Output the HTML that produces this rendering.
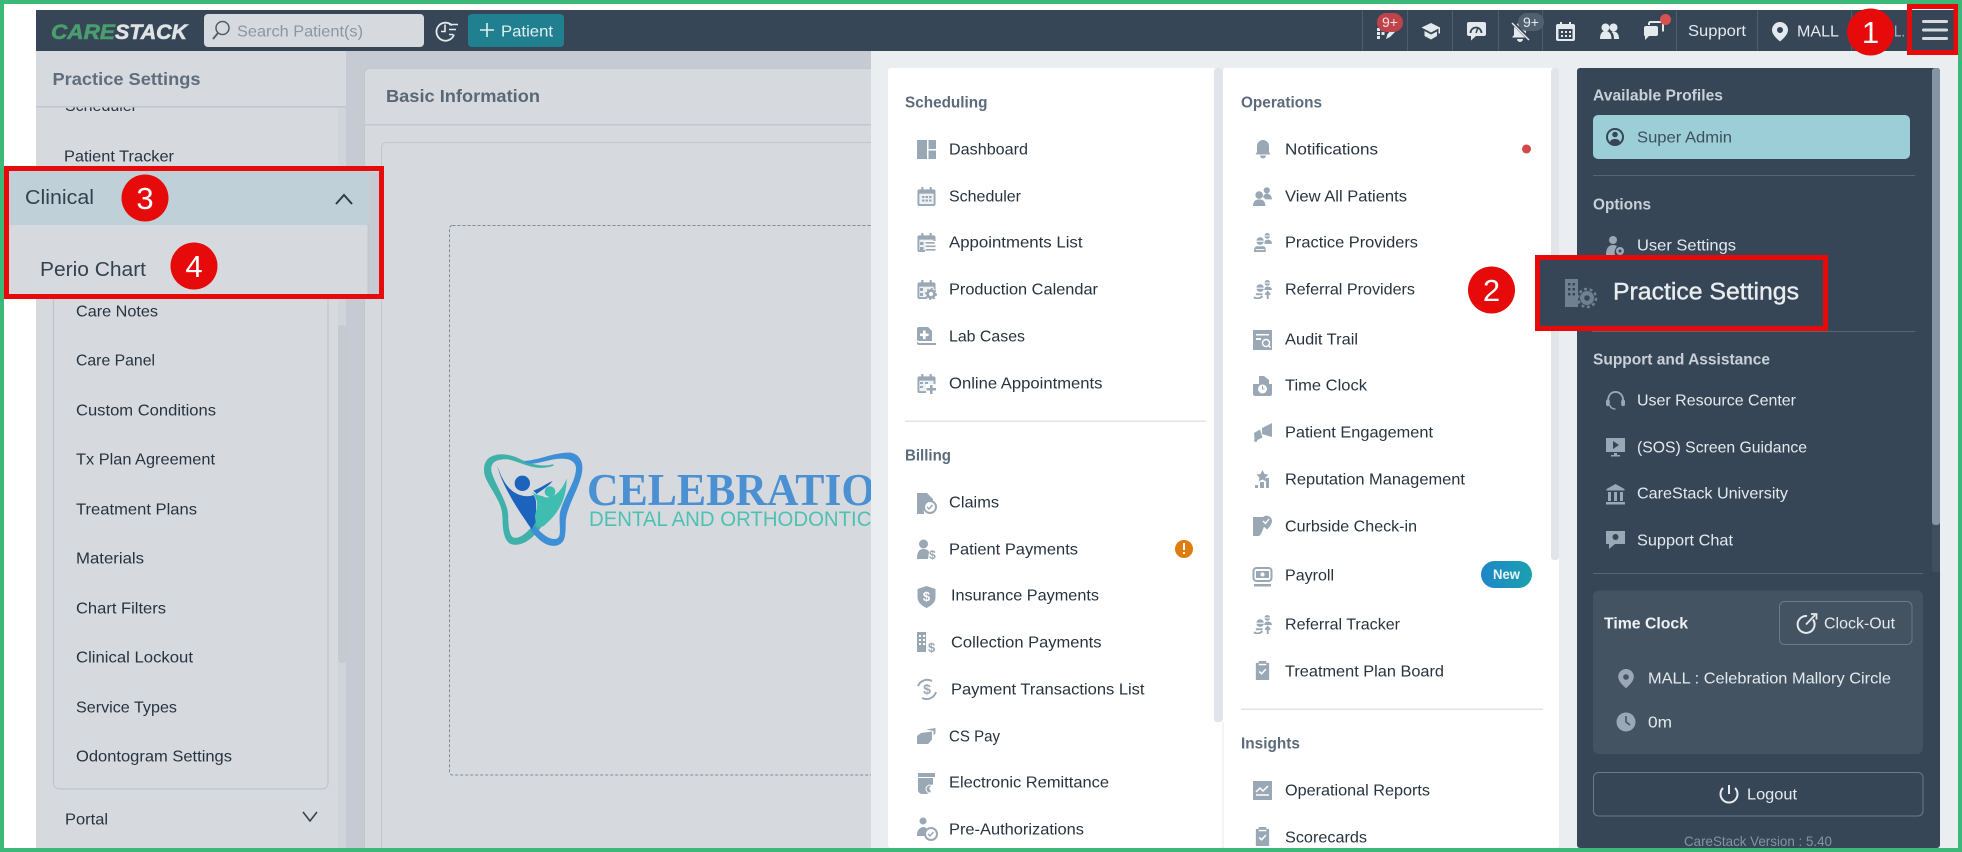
<!DOCTYPE html>
<html><head><meta charset="utf-8"><title>Practice Settings</title>
<style>
html,body{margin:0;padding:0;background:#fff}
svg{display:block;font-family:"Liberation Sans",sans-serif}
.i{font-size:16px;fill:#27333f}
.s{font-size:16px;fill:#27333f}
.h{font-size:16px;font-weight:bold;fill:#5c6b7b}
.d{font-size:16px;fill:#e4e9ed}
.dh{font-size:16px;font-weight:bold;fill:#c8d0d8}
.ic{fill:#9aa8b5}
.wh{fill:#e4e9ed}
.di{fill:#9aa8b5}
.n{font-size:31px;fill:#fff;text-anchor:middle}
</style></head><body>
<svg xmlns="http://www.w3.org/2000/svg" width="1962" height="852" viewBox="0 0 1962 852">
<defs>
<clipPath id="cSide"><rect x="36" y="107" width="310" height="60"/></clipPath>
<clipPath id="cVer"><rect x="1577" y="800" width="363" height="48"/></clipPath>
<symbol id="cal" viewBox="0 0 20 20"><path d="M2.500 2.500h15a2 2 0 0 1 2 2V18a2 2 0 0 1-2 2h-15a2 2 0 0 1-2-2V4.500a2 2 0 0 1 2-2z"/><rect x="4.500" y="0" width="2.200" height="4"/><rect x="13.300" y="0" width="2.200" height="4"/><rect x="2.500" y="7" width="15" height="11" fill="#eef1f3"/></symbol>
<symbol id="ppl" viewBox="0 0 20 20"><circle cx="6.500" cy="8.500" r="4"/><path d="M0 20c0-5 2.500-7 6.500-7S13 15 13 20z"/><circle cx="14.500" cy="3.500" r="3.300"/><path d="M10.500 10.500c1-2.500 2.500-3.500 4-3.500 3 0 5 2 5.500 6h-7c-.7-1-1.500-2-2.500-2.500z"/></symbol>
<symbol id="prov" viewBox="0 0 20 20"><circle cx="7.500" cy="8.500" r="4"/><rect x="2" y="8" width="11" height="1.200" fill="#fff"/><path d="M1 20c0-3.500 1-6 3-6h7c2 0 2.500 2.500 2.500 6z"/><path d="M3 17h9v1H3z" fill="#fff"/><circle cx="15" cy="3" r="3"/><rect x="11" y="2.600" width="8" height="1" fill="#fff"/><path d="M12 11.500c0-3 1-4.500 3.500-4.500s4.500 1.500 4.500 4.500z"/></symbol>
<symbol id="ref" viewBox="0 0 20 20"><circle cx="7.500" cy="8.500" r="4"/><rect x="2" y="8" width="11" height="1.200" fill="#fff"/><path d="M1 18c2 2 6 2 9-1" fill="none" stroke="currentColor" stroke-width="2"/><path d="M3 14h7v2H3z"/><circle cx="15" cy="3" r="3"/><rect x="11" y="2.600" width="8" height="1" fill="#fff"/><path d="M12 10.500c0-2.500 1-3.500 3.500-3.500s4.500 1 4.500 3.500z"/><path d="M15.500 20v-7M13 15.500l2.500-3 2.500 3" fill="none" stroke="currentColor" stroke-width="2"/></symbol>
<symbol id="clip" viewBox="0 0 20 20"><path d="M3 2h3V0h8v2h3v18H3z"/><path d="M6.500 11l2.500 2.500 4.500-5" fill="none" stroke="#fff" stroke-width="1.600"/><rect x="6" y="3" width="8" height="1.500" fill="#fff"/></symbol>
<symbol id="head" viewBox="0 0 20 20"><path d="M2 12C2 5 5 1 10 1s8 4 8 9" fill="none" stroke="currentColor" stroke-width="2"/><rect x="0" y="9" width="4" height="7" rx="2"/><rect x="16" y="9" width="4" height="7" rx="2"/><path d="M4 15c1 3 3 4 6 4" fill="none" stroke="currentColor" stroke-width="1.500"/></symbol>
<linearGradient id="nw" x1="0" x2="1"><stop offset="0" stop-color="#1f86c9"/><stop offset="1" stop-color="#1aa1ae"/></linearGradient>
</defs>

<rect width="1962" height="852" fill="#fff"/>

<!-- sidebar -->
<rect x="36" y="51" width="310" height="797" fill="#d6dade"/>
<rect x="338" y="107" width="8" height="741" fill="#d1d5da"/>
<rect x="338" y="325" width="8" height="338" rx="3" fill="#c5cad0"/>
<g clip-path="url(#cSide)"><text x="65" y="111" class="s" textLength="72" lengthAdjust="spacingAndGlyphs">Scheduler</text></g>
<rect x="36" y="106" width="310" height="1.500" fill="#bfc5cf"/>
<text x="52.500" y="85" font-size="17.500" font-weight="bold" fill="#5f6d7c" textLength="148" lengthAdjust="spacingAndGlyphs">Practice Settings</text>
<text x="64" y="161.500" class="s" textLength="110" lengthAdjust="spacingAndGlyphs">Patient Tracker</text>
<rect x="53.500" y="280" width="274.500" height="509" rx="6" fill="none" stroke="#bdc4cf" stroke-width="1.200"/>
<g class="s">
<text x="76" y="316.500" class="s" textLength="82" lengthAdjust="spacingAndGlyphs">Care Notes</text>
<text x="76" y="365.500" class="s" textLength="79" lengthAdjust="spacingAndGlyphs">Care Panel</text>
<text x="76" y="415.500" class="s" textLength="140" lengthAdjust="spacingAndGlyphs">Custom Conditions</text>
<text x="76" y="464.500" class="s" textLength="139" lengthAdjust="spacingAndGlyphs">Tx Plan Agreement</text>
<text x="76" y="514.500" class="s" textLength="121" lengthAdjust="spacingAndGlyphs">Treatment Plans</text>
<text x="76" y="563.500" class="s" textLength="68" lengthAdjust="spacingAndGlyphs">Materials</text>
<text x="76" y="613.500" class="s" textLength="90" lengthAdjust="spacingAndGlyphs">Chart Filters</text>
<text x="76" y="662.500" class="s" textLength="117" lengthAdjust="spacingAndGlyphs">Clinical Lockout</text>
<text x="76" y="712.500" class="s" textLength="101" lengthAdjust="spacingAndGlyphs">Service Types</text>
<text x="76" y="761.500" class="s" textLength="156" lengthAdjust="spacingAndGlyphs">Odontogram Settings</text>
</g>
<text x="65" y="824.500" class="s" textLength="43" lengthAdjust="spacingAndGlyphs">Portal</text>
<path d="M303 812l7 9 7-9" fill="none" stroke="#36434f" stroke-width="1.600"/>

<!-- content -->
<rect x="346" y="51" width="525" height="797" fill="#c6cbd3"/>
<rect x="364.500" y="68.500" width="520" height="790" rx="5" fill="#d6dade" stroke="#c1c7d0"/>
<rect x="365" y="124" width="510" height="1.500" fill="#c1c7d0"/>
<text x="386" y="102" font-size="17.500" font-weight="bold" fill="#5a6876" textLength="154" lengthAdjust="spacingAndGlyphs">Basic Information</text>
<rect x="381.500" y="142.500" width="520" height="720" rx="5" fill="#d6dade" stroke="#c1c7d0"/>
<rect x="449.500" y="225.500" width="460" height="549.500" rx="3" fill="none" stroke="#818c99" stroke-dasharray="3 2"/>
<!-- logo -->
<g transform="translate(470 440) scale(.33333)">
<path fill="#3fb1a8" stroke="#3fb1a8" stroke-width="5" d="M75 48C45 55 38 85 50 115C75 165 100 190 100 235C100 280 108 312 135 312C165 312 190 290 215 255L200 245C175 280 150 300 130 295C115 290 112 260 112 225C110 185 70 130 62 95C58 70 70 55 110 55C150 60 190 95 250 75C215 85 180 75 140 55C115 45 95 42 75 48Z"/>
<path fill="#3f8fd6" stroke="#3f8fd6" stroke-width="5" d="M165 65C200 65 250 40 300 40C330 45 340 70 332 105C322 150 290 195 285 240C283 275 290 310 255 315C225 318 200 290 185 270L195 262C215 285 240 305 262 298C280 290 268 250 272 220C280 175 325 120 320 80C315 55 285 50 255 55C220 60 190 75 165 65Z"/>
<path fill="#1c63bd" d="M82 78C95 130 130 190 185 268L198 245C195 215 205 180 190 165C180 170 165 170 150 165C120 155 100 130 82 78Z"/>
<circle cx="157" cy="130" r="23" fill="#1c63bd"/>
<path fill="#1c63bd" d="M190 152C210 145 230 130 248 123C235 140 215 150 200 162Z"/>
<path fill="#3fbdb0" d="M185 155C205 170 215 165 225 172C250 175 275 155 290 115C290 170 270 215 230 250C205 275 195 255 195 225C205 195 205 180 185 155Z"/>
<circle cx="240" cy="155" r="16" fill="#3fbdb0"/>
</g>
<text x="587" y="505" font-family="Liberation Serif,serif" font-weight="bold" font-size="46" fill="#4a90d2" textLength="320" lengthAdjust="spacingAndGlyphs">CELEBRATION</text>
<text x="589" y="526" font-size="21" fill="#4fc1b3" textLength="296" lengthAdjust="spacingAndGlyphs">DENTAL AND ORTHODONTICS</text>

<!-- menu panel -->
<rect x="871" y="51" width="1087" height="797" fill="#eaeef1"/>
<rect x="888" y="68" width="335" height="780" rx="3" fill="#fff"/>
<rect x="1223" y="68" width="336" height="780" rx="3" fill="#fff"/>
<rect x="1214" y="68" width="9" height="654" rx="3" fill="#e1e5e9"/>
<rect x="1222.500" y="722" width="1" height="126" fill="#e4e8ee"/>
<rect x="1551" y="68" width="8" height="492" rx="3" fill="#e1e5e9"/>
<rect x="1559" y="68" width="18" height="780" fill="#eaeef1"/>

<!-- Col 1 -->
<text x="905" y="107.500" class="h" textLength="82.500" lengthAdjust="spacingAndGlyphs">Scheduling</text>
<rect x="905" y="420.500" width="301" height="1.500" fill="#e1e4ea"/>
<text x="905" y="460.500" class="h" textLength="46" lengthAdjust="spacingAndGlyphs">Billing</text>
<text x="949" y="154.500" class="i" textLength="79" lengthAdjust="spacingAndGlyphs">Dashboard</text>
<text x="949" y="201.500" class="i" textLength="72" lengthAdjust="spacingAndGlyphs">Scheduler</text>
<text x="949" y="247.500" class="i" textLength="133.500" lengthAdjust="spacingAndGlyphs">Appointments List</text>
<text x="949" y="294.500" class="i" textLength="149" lengthAdjust="spacingAndGlyphs">Production Calendar</text>
<text x="949" y="341.500" class="i" textLength="76" lengthAdjust="spacingAndGlyphs">Lab Cases</text>
<text x="949" y="388.500" class="i" textLength="153.500" lengthAdjust="spacingAndGlyphs">Online Appointments</text>
<text x="949" y="507.500" class="i" textLength="50" lengthAdjust="spacingAndGlyphs">Claims</text>
<text x="949" y="554.500" class="i" textLength="129" lengthAdjust="spacingAndGlyphs">Patient Payments</text>
<text x="951" y="600.500" class="i" textLength="148" lengthAdjust="spacingAndGlyphs">Insurance Payments</text>
<text x="951" y="647.500" class="i" textLength="150.500" lengthAdjust="spacingAndGlyphs">Collection Payments</text>
<text x="951" y="694.500" class="i" textLength="193.500" lengthAdjust="spacingAndGlyphs">Payment Transactions List</text>
<text x="949" y="741.500" class="i" textLength="51" lengthAdjust="spacingAndGlyphs">CS Pay</text>
<text x="949" y="787.500" class="i" textLength="160" lengthAdjust="spacingAndGlyphs">Electronic Remittance</text>
<text x="949" y="834.500" class="i" textLength="135" lengthAdjust="spacingAndGlyphs">Pre-Authorizations</text>

<!-- Col 1 icons -->
<g class="ic" color="#9aa8b5">
<path d="M917 140h10v19h-10zM928.500 140h7.500v9h-7.500zM928.500 150.500h7.500v8.500h-7.500z"/>
<use href="#cal" x="917" y="187" width="19" height="19"/><path d="M922 196h2.500v2H922zM925.500 196h2.500v2h-2.500zM929 196h2.500v2H929zM922 199.500h2.500v2H922zM925.500 199.500h2.500v2h-2.500zM929 199.500h2.500v2H929z"/>
<use href="#cal" x="917" y="233" width="19" height="19"/><rect x="925" y="241" width="11" height="12" fill="#fff"/><path d="M920 242h3.500v3H920zM920 247h3.500v3H920zM925.500 242h9v1.600h-9zM925.500 245.500h10v1.600h-10zM925.500 249h10v1.600h-10z"/>
<use href="#cal" x="917" y="280" width="19" height="19"/><circle cx="931" cy="294" r="6" fill="#fff"/><circle cx="931" cy="294" r="3.500" fill="none" stroke="#9aa8b5" stroke-width="2.800"/><circle cx="931" cy="294" r="5.200" fill="none" stroke="#9aa8b5" stroke-width="1.600" stroke-dasharray="2 2"/><path d="M920 288h3v3h-3zM920 293h3v3h-3z"/>
<path d="M919 327h9l4 4v10h-13a3 3 0 0 1-2-1V329a2 2 0 0 1 2-2z"/><path d="M922.500 343h13.500v2h-17a2 2 0 0 1-2-2v-1.500c.5 1 1.500 1.500 3 1.500z"/><path d="M923 330.500h2.600v3h3v2.600h-3v3H923v-3h-3v-2.600h3z" fill="#fff"/>
<use href="#cal" x="917" y="374" width="19" height="19"/><rect x="926" y="384" width="11" height="10" fill="#fff"/><path d="M930 385h2.500v3H936v2.500h-3.500V394H930v-3.500h-3.500V388H930z"/><path d="M920 382h3v2h-3zM920 386h3v2h-3zM925 382h3v2h-3z"/>
<path d="M917 493h10l6 6v3a8 8 0 0 0-9 10v2h-7z"/><circle cx="930" cy="507" r="6" fill="#fff" stroke="#9aa8b5" stroke-width="2"/><path d="M927 507l2 2 3.500-4" fill="none" stroke="#9aa8b5" stroke-width="1.400"/>
<circle cx="923.500" cy="544" r="4.500"/><path d="M917 559c0-7 2-10 6.500-10s5 2 5.500 3l-1 7z"/><text x="929" y="559" font-size="12" font-weight="bold" fill="#9aa8b5">$</text>
<path d="M926.500 586l9 3v8c0 6-5 9-9 11-4-2-9-5-9-11v-8z"/><text x="926.500" y="601" font-size="13" font-weight="bold" text-anchor="middle" fill="#fff">$</text>
<path d="M917 632h9v20h-9z"/><path d="M919 635h2v2h-2zM923 635h2v2h-2zM919 639h2v2h-2zM923 639h2v2h-2zM919 643h2v2h-2zM923 643h2v2h-2z" fill="#fff"/><text x="928" y="652" font-size="13" font-weight="bold" fill="#9aa8b5">$</text>
<text x="927" y="694" font-size="14" font-weight="bold" text-anchor="middle" fill="#9aa8b5">$</text><path d="M918 686a10 10 0 0 1 14-5M936 692a10 10 0 0 1-14 6" fill="none" stroke="#9aa8b5" stroke-width="2"/>
<path d="M921 733l11-1.500v8l-4 4.500h-11v-8z"/><path d="M926 729.500l9.500-1.500v5.500l-2 2v-4.500z"/>
<path d="M918 773h17v4h-17zM918 778h15v6l-4 4 2 4-4 2h-5c-2 0-4-2-4-4z"/><circle cx="930" cy="789" r="4" fill="none" stroke="#fff" stroke-width="1"/>
<circle cx="923" cy="821" r="3.500"/><path d="M917 835c0-5 3-8 7-8 1 0 2 1 3 2-2 2-2 5-1 7h-9z"/><circle cx="931" cy="834" r="6" fill="#fff" stroke="#9aa8b5" stroke-width="2"/><path d="M928 834l2 2 3.500-4" fill="none" stroke="#9aa8b5" stroke-width="1.400"/>
</g>
<ellipse cx="1184" cy="549" rx="9" ry="9" fill="#e07c0c"/><rect x="1183" y="543" width="2" height="7" fill="#fff"/><rect x="1183" y="552" width="2" height="2" fill="#fff"/>

<!-- Col 2 -->
<text x="1241" y="107.500" class="h" textLength="81" lengthAdjust="spacingAndGlyphs">Operations</text>
<text x="1285" y="154.500" class="i" textLength="93" lengthAdjust="spacingAndGlyphs">Notifications</text>
<text x="1285" y="201.500" class="i" textLength="122" lengthAdjust="spacingAndGlyphs">View All Patients</text>
<text x="1285" y="247.500" class="i" textLength="133" lengthAdjust="spacingAndGlyphs">Practice Providers</text>
<text x="1285" y="294.500" class="i" textLength="130" lengthAdjust="spacingAndGlyphs">Referral Providers</text>
<text x="1285" y="344.500" class="i" textLength="73" lengthAdjust="spacingAndGlyphs">Audit Trail</text>
<text x="1285" y="390.500" class="i" textLength="82" lengthAdjust="spacingAndGlyphs">Time Clock</text>
<text x="1285" y="437.500" class="i" textLength="148" lengthAdjust="spacingAndGlyphs">Patient Engagement</text>
<text x="1285" y="484.500" class="i" textLength="180" lengthAdjust="spacingAndGlyphs">Reputation Management</text>
<text x="1285" y="531.500" class="i" textLength="132" lengthAdjust="spacingAndGlyphs">Curbside Check-in</text>
<text x="1285" y="580.500" class="i" textLength="49" lengthAdjust="spacingAndGlyphs">Payroll</text>
<text x="1285" y="629.500" class="i" textLength="115" lengthAdjust="spacingAndGlyphs">Referral Tracker</text>
<text x="1285" y="676.500" class="i" textLength="159" lengthAdjust="spacingAndGlyphs">Treatment Plan Board</text>
<rect x="1241" y="708.500" width="302" height="1.500" fill="#e1e4ea"/>
<text x="1241" y="748.500" class="h" textLength="59" lengthAdjust="spacingAndGlyphs">Insights</text>
<text x="1285" y="795.500" class="i" textLength="145" lengthAdjust="spacingAndGlyphs">Operational Reports</text>
<text x="1285" y="842.500" class="i" textLength="82" lengthAdjust="spacingAndGlyphs">Scorecards</text>
<circle cx="1526.500" cy="149" r="4.500" fill="#d3484b"/>
<rect x="1481" y="561" width="51" height="27" rx="13.500" fill="url(#nw)"/>
<text x="1493" y="579" font-size="14" font-weight="bold" fill="#eaf4f7" textLength="27" lengthAdjust="spacingAndGlyphs">New</text>

<!-- Col 2 icons -->
<g class="ic" color="#9aa8b5">
<path d="M1263 140a6 6 0 0 1 6 6v6l1.500 2.500h-15l1.500-2.500v-6a6 6 0 0 1 6-6zM1260 155.500h6a3 3 0 0 1-6 0z"/>
<use href="#ppl" x="1253" y="187" width="19" height="19"/>
<use href="#prov" x="1253" y="233" width="19" height="19"/>
<use href="#ref" x="1253" y="280" width="19" height="19"/>
<path d="M1253 330h19v20h-19z"/><path d="M1256 334h13v1.500h-13zM1256 338h5v2h-5z" fill="#fff"/><circle cx="1266" cy="343" r="3.500" fill="none" stroke="#fff" stroke-width="1.400"/><path d="M1268.500 345.500l2 2" stroke="#fff" stroke-width="1.400"/>
<path d="M1259 376h5l5 4v4h3v10c0 1-1 2-2 2h-15c-1 0-2-1-2-2v-10h6z"/><circle cx="1262.500" cy="389" r="4.500" fill="#fff"/><path d="M1262.500 386v3h2" fill="none" stroke="#9aa8b5"/>
<path d="M1262 428l10-5v14l-10-3z"/><path d="M1254 433l6-3.500 2.500 8-5 2.500-1 2-2.500-.5 .5-3z"/>
<path d="M1262.500 470l2 4 4 .5-3 3 .8 4-3.800-2-3.800 2 .8-4-3-3 4-.5z"/><path d="M1255 485h3v3h-3zM1260 482h4v6h-4zM1266 478h3v10h-3z"/>
<path d="M1253 517h10l3 5-5 12-2 2h-6z"/><path d="M1263 517a5.500 5.500 0 0 1 9 4c0 4-4.500 8-5 8.500-1-1-6-5-6-8.500 0-1.500.5-3 2-4z"/><path d="M1263 521l2.500 2.500 3.500-4.500" fill="none" stroke="#fff" stroke-width="1.400"/>
<rect x="1253.500" y="568" width="18" height="13" rx="3" fill="none" stroke="#9aa8b5" stroke-width="2"/><path d="M1256 571h13v7h-13z"/><circle cx="1262.500" cy="574.500" r="2" fill="#fff"/><rect x="1254" y="584" width="17" height="2.500"/>
<use href="#ref" x="1253" y="615" width="19" height="19"/>
<use href="#clip" x="1253" y="661" width="19" height="19"/>
<path d="M1253 781h19v19h-19z"/><path d="M1256 792l4-4 3 3 5-5M1256 795h13" fill="none" stroke="#fff" stroke-width="1.500"/>
<use href="#clip" x="1253" y="827" width="19" height="19"/>
</g>

<!-- dark panel -->
<rect x="1577" y="68" width="363" height="780" rx="3" fill="#364656"/>
<rect x="1932" y="68" width="8" height="504" rx="3" fill="#3f4f5e"/>
<rect x="1932" y="68" width="8" height="457" rx="3" fill="#8494a4"/>
<text x="1593" y="100.500" class="dh" textLength="130" lengthAdjust="spacingAndGlyphs">Available Profiles</text>
<rect x="1593" y="115" width="317" height="44" rx="5" fill="#9bced6"/>
<circle cx="1615" cy="137" r="8" fill="none" stroke="#364656" stroke-width="2"/><circle cx="1615" cy="134.500" r="2.800" fill="#364656"/><path d="M1610 143c0-3 2-4 5-4s5 1 5 4a8 8 0 0 1-10 0z" fill="#364656"/>
<text x="1637" y="142.500" font-size="16" fill="#3e4e5d" textLength="95" lengthAdjust="spacingAndGlyphs">Super Admin</text>
<rect x="1593" y="175" width="322" height="1" fill="#586674"/>
<text x="1593" y="209.500" class="dh" textLength="58" lengthAdjust="spacingAndGlyphs">Options</text>
<circle cx="1613" cy="240" r="4" class="di"/><path d="M1606 255c0-6 2-10 7-10 2 0 3 .5 4 1-2 3-3 6-2 9z" class="di"/><circle cx="1620" cy="251" r="4" class="di"/><circle cx="1620" cy="251" r="1.500" fill="#364656"/>
<text x="1637" y="250.500" class="d" textLength="99" lengthAdjust="spacingAndGlyphs">User Settings</text>

<rect x="1592" y="331" width="323" height="1" fill="#586674"/>
<text x="1593" y="364.500" class="dh" textLength="177" lengthAdjust="spacingAndGlyphs">Support and Assistance</text>
<text x="1637" y="405.500" class="d" textLength="159" lengthAdjust="spacingAndGlyphs">User Resource Center</text>
<text x="1637" y="452.500" class="d" textLength="170" lengthAdjust="spacingAndGlyphs">(SOS) Screen Guidance</text>
<text x="1637" y="498.500" class="d" textLength="151" lengthAdjust="spacingAndGlyphs">CareStack University</text>
<text x="1637" y="545.500" class="d" textLength="96" lengthAdjust="spacingAndGlyphs">Support Chat</text>
<g class="di" color="#9aa8b5">
<use href="#head" x="1606" y="391" width="19" height="19"/>
<path d="M1606 438h19v14h-19z"/><path d="M1613 441l6 4-6 4z" fill="#364656"/><path d="M1614 453h3v2h3v1.500h-9V455h3z"/>
<path d="M1615.500 484l9 5v1.500h-18V489z"/><path d="M1608 492h3v9h-3zM1614 492h3v9h-3zM1620 492h3v9h-3zM1606 502h19v2.500h-19z"/>
<path d="M1606 531h19v13h-10l-6 5v-5h-3z"/><circle cx="1615.500" cy="537" r="3" fill="#364656"/>
</g>
<rect x="1593" y="573" width="330" height="1" fill="#586674"/>
<rect x="1593" y="590.500" width="330" height="163.500" rx="6" fill="#445362"/>
<text x="1604" y="628.500" font-size="16" font-weight="bold" fill="#eef2f5" textLength="84" lengthAdjust="spacingAndGlyphs">Time Clock</text>
<rect x="1779.500" y="601.500" width="132.500" height="43" rx="5" fill="none" stroke="#6a7a89"/>
<path d="M1813 619.500A8.500 8.500 0 1 1 1807 616" fill="none" stroke="#e4e9ed" stroke-width="2"/><path d="M1806 624.500l9-9.500M1811 614h5.500v5.500" fill="none" stroke="#e4e9ed" stroke-width="1.800"/>
<text x="1824" y="628.500" class="d" textLength="71" lengthAdjust="spacingAndGlyphs">Clock-Out</text>
<path d="M1626 669a7.800 7.800 0 0 1 7.800 7.800c0 4.500-5 9-7.800 11.500-2.800-2.500-7.800-7-7.800-11.500A7.800 7.800 0 0 1 1626 669z" class="di"/><circle cx="1626" cy="677" r="2.800" fill="#445362"/>
<text x="1648" y="683.500" class="d" textLength="243" lengthAdjust="spacingAndGlyphs">MALL : Celebration Mallory Circle</text>
<circle cx="1626" cy="722" r="9.500" class="di"/><path d="M1626 716v6l4 3" fill="none" stroke="#445362" stroke-width="1.600"/>
<text x="1648" y="727.500" class="d" textLength="24" lengthAdjust="spacingAndGlyphs">0m</text>
<rect x="1593.500" y="772.500" width="329.500" height="43.500" rx="5" fill="none" stroke="#6a7a89"/>
<path d="M1723 788a8.500 8.500 0 1 0 12 0" fill="none" stroke="#e8ecef" stroke-width="2"/><rect x="1728" y="785" width="2" height="9" fill="#e8ecef"/>
<text x="1747" y="799.500" class="d" textLength="50" lengthAdjust="spacingAndGlyphs">Logout</text>
<g clip-path="url(#cVer)"><text x="1684" y="846" font-size="14" fill="#8593a1" textLength="148" lengthAdjust="spacingAndGlyphs">CareStack Version : 5.40</text></g>

<!-- header -->
<rect x="36" y="10" width="1922" height="41" fill="#364656"/>
<text x="51" y="39" font-size="21" font-weight="bold" font-style="italic" fill="#4a9d6f" stroke="#4a9d6f" stroke-width=".6" textLength="64" lengthAdjust="spacingAndGlyphs">CARE</text>
<text x="115" y="39" font-size="21" font-weight="bold" font-style="italic" fill="#dfe3e6" stroke="#dfe3e6" stroke-width=".6" textLength="72" lengthAdjust="spacingAndGlyphs">STACK</text>
<rect x="204" y="14" width="220" height="33" rx="4" fill="#d6dade"/>
<circle cx="222.500" cy="28" r="6.500" fill="none" stroke="#4e5c69" stroke-width="1.500"/><path d="M218 33l-5 6" stroke="#4e5c69" stroke-width="1.800"/>
<text x="237" y="36.500" font-size="16" fill="#8a96a3" textLength="126" lengthAdjust="spacingAndGlyphs">Search Patient(s)</text>
<g transform="translate(0 -1.500)"><path d="M452 27a9 9 0 1 0 2 9" fill="none" stroke="#e4e9ed" stroke-width="1.800"/><path d="M445 26v7h-4M449 26h9M449 31h7M449 36h4" fill="none" stroke="#e4e9ed" stroke-width="1.600"/></g>
<rect x="468" y="14" width="96" height="33" rx="4" fill="#21808f"/>
<path d="M487 23v14M480 30h14" stroke="#dfeef0" stroke-width="1.600"/>
<text x="501" y="36.500" font-size="16" fill="#e4eff1" textLength="52" lengthAdjust="spacingAndGlyphs">Patient</text>

<g fill="#4e5d6c"><rect x="1362" y="10" width="1" height="41"/><rect x="1407" y="10" width="1" height="41"/><rect x="1452" y="10" width="1" height="41"/><rect x="1498" y="10" width="1" height="41"/><rect x="1542" y="10" width="1" height="41"/><rect x="1676" y="10" width="1" height="41"/><rect x="1757" y="10" width="1" height="41"/><rect x="1851" y="10" width="1" height="41"/></g>

<g class="wh" color="#e4e9ed">
<path d="M1377 28h3v3h-3zM1381.500 28h3v3h-3zM1377 32h3v3h-3zM1381.500 32h3v3h-3zM1377 36h3v3h-3z"/><path d="M1386 39l1.500-5 7-7 2.500 3-7 7z"/>
<path d="M1431 23l9 4.500v6h-1.500v-5l-7.500 4-9.500-5z"/><path d="M1424.500 31l6.500 3.500 6-3v4.500l-6 3.500-6.500-3.500z"/>
<path d="M1469 22h15a2 2 0 0 1 2 2v10a2 2 0 0 1-2 2h-8l-5 4.500V36h-2a2 2 0 0 1-2-2V24a2 2 0 0 1 2-2z"/><path d="M1470.500 33a5.500 5.500 0 0 1 11 0" fill="none" stroke="#364656" stroke-width="1.800"/><path d="M1476 33l2-5.500" stroke="#364656" stroke-width="1.500"/>
<path d="M1520 23a6 6 0 0 1 6 6v6l2 2.500h-16l2-2.500v-6a6 6 0 0 1 6-6zM1517 39h6a3 3 0 0 1-6 0z"/><path d="M1512 22l18 18" stroke="#364656" stroke-width="3.500"/><path d="M1512 23l17 17" stroke="#e4e9ed" stroke-width="1.500"/>
<path d="M1558 24h15a2 2 0 0 1 2 2v13a2 2 0 0 1-2 2h-15a2 2 0 0 1-2-2V26a2 2 0 0 1 2-2z"/><rect x="1560" y="22" width="2" height="3"/><rect x="1569" y="22" width="2" height="3"/><rect x="1558.500" y="29" width="14" height="10" fill="#364656"/><path d="M1561 31h2v2h-2zM1565 31h2v2h-2zM1569 31h2v2h-2zM1561 35h2v2h-2zM1565 35h2v2h-2zM1569 35h2v2h-2z"/>
<circle cx="1605.500" cy="27.500" r="4"/><circle cx="1613.500" cy="27.500" r="4"/><path d="M1600 39c0-5.500 2-8 5.500-8s6 2.500 6 8z"/><path d="M1613 31.500c4 0 6 2.500 6 7.500h-5c0-3-.5-5.500-2.500-7z"/>
<path d="M1649 25v-1.500a1.500 1.500 0 0 1 1.500-1.500h11a1.500 1.500 0 0 1 1.500 1.500v8" fill="none" stroke="#e4e9ed" stroke-width="2"/><path d="M1646 26h10a2 2 0 0 1 2 2v6a2 2 0 0 1-2 2h-7l-4 4v-4a1 1 0 0 1-1-1v-7a2 2 0 0 1 2-2z"/>
<path d="M1780 22a8 8 0 0 1 8 8c0 4.500-5 9-8 11.500-3-2.500-8-7-8-11.500a8 8 0 0 1 8-8z"/>
</g>
<circle cx="1780" cy="30" r="3" fill="#364656"/>
<rect x="1377" y="13" width="26" height="19" rx="9.500" fill="#c0434a"/>
<text x="1390" y="27" font-size="14" text-anchor="middle" fill="#f3e3e4">9+</text>
<rect x="1518" y="13" width="26" height="18" rx="9" fill="#50606f"/>
<text x="1531" y="27" font-size="14" text-anchor="middle" fill="#e4e9ed">9+</text>
<circle cx="1665.500" cy="19.500" r="5.500" fill="#d5524f"/>
<text x="1688" y="36" class="d" textLength="58" lengthAdjust="spacingAndGlyphs">Support</text>
<text x="1797" y="36.500" class="d" textLength="42" lengthAdjust="spacingAndGlyphs">MALL</text>
<text x="1894" y="36.500" font-size="16" fill="#aab5bf" textLength="11" lengthAdjust="spacingAndGlyphs">L.</text>
<rect x="1922" y="20" width="26" height="3" rx="1.500" fill="#d6dade"/><rect x="1922" y="28.500" width="26" height="3" rx="1.500" fill="#d6dade"/><rect x="1922" y="37" width="26" height="3" rx="1.500" fill="#d6dade"/>

<!-- annotation: clinical -->
<rect x="6.500" y="168.500" width="375" height="128" fill="#d6dade"/>
<rect x="7" y="170" width="362" height="55" fill="#bfd0d8"/>
<rect x="369" y="225" width="12" height="70" fill="#c6cbd3"/>
<rect x="369" y="172" width="12" height="53" fill="#c6cbd3"/>
<rect x="367.500" y="225" width="1.500" height="72" fill="#c1c7d0"/>
<text x="25" y="204" font-size="20" fill="#34424f" textLength="69" lengthAdjust="spacingAndGlyphs">Clinical</text>
<path d="M336 204l8-9 8 9" fill="none" stroke="#2f3c48" stroke-width="2"/>
<text x="40" y="276" font-size="20" fill="#34424f" textLength="106" lengthAdjust="spacingAndGlyphs">Perio Chart</text>
<rect x="6.500" y="168.500" width="375" height="128" fill="none" stroke="#e60a0a" stroke-width="5"/>

<!-- annotation: practice settings -->
<rect x="1537.500" y="257.500" width="288" height="71" fill="#364656"/>
<g fill="#6f8092">
<path d="M1565 279h13v28h-13z"/><path d="M1568 283h2.500v2.500H1568zM1572.500 283h2.500v2.500h-2.500zM1568 288h2.500v2.500H1568zM1572.500 288h2.500v2.500h-2.500zM1568 293h2.500v2.500H1568zM1572.500 293h2.500v2.500h-2.500z" fill="#364656"/>
<circle cx="1587" cy="298" r="7"/><circle cx="1587" cy="298" r="9" fill="none" stroke="#6f8092" stroke-width="2.500" stroke-dasharray="3 2.600"/><circle cx="1587" cy="298" r="2.800" fill="#364656"/>
</g>
<text x="1613" y="299.500" font-size="24" fill="#e9edf0" stroke="#e9edf0" stroke-width=".4" textLength="186" lengthAdjust="spacingAndGlyphs">Practice Settings</text>
<rect x="1537.500" y="257.500" width="288" height="71" fill="none" stroke="#e60a0a" stroke-width="5"/>

<!-- annotation: hamburger -->
<rect x="1909.500" y="6.500" width="46.500" height="46" fill="none" stroke="#e60a0a" stroke-width="5"/>

<!-- circles -->
<g fill="#e60a0a">
<circle cx="1870.500" cy="32" r="23.500"/>
<circle cx="1491.500" cy="290" r="23.500"/>
<circle cx="145" cy="198" r="23.500"/>
<circle cx="194" cy="266" r="23.500"/>
</g>
<text x="1870.500" y="43" class="n">1</text>
<text x="1491.500" y="301" class="n">2</text>
<text x="145" y="209" class="n">3</text>
<text x="194" y="277" class="n">4</text>

<!-- green frame -->
<rect x="2" y="2" width="1958" height="848" fill="none" stroke="#3cb878" stroke-width="4"/>
</svg>
</body></html>
